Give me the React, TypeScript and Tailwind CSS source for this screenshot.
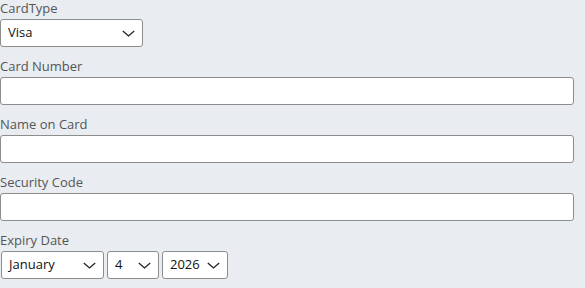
import React from "react";

const Chevron = () => (
  <svg width="13" height="7" viewBox="0 0 13 7" fill="none" className="shrink-0">
    <path d="M0.8 0.9 L6.5 5.9 L12.2 0.9" stroke="#222" strokeWidth="1.3" />
  </svg>
);

const Select = ({ value, w }: { value: string; w: string }) => (
  <div
    className={`${w} h-[28px] bg-white border border-[#8d8d8d] rounded-[3px] flex items-center justify-between pl-[7px] pr-[7px] text-[13px] text-[#111]`}
  >
    <span>{value}</span>
    <Chevron />
  </div>
);

const Label = ({ children }: { children: React.ReactNode }) => (
  <div className="text-[13px] leading-[19px] text-[#555]">{children}</div>
);

const Input = () => (
  <div className="w-[574px] h-[28px] bg-white border border-[#8d8d8d] rounded-[3px]" />
);

export default function App() {
  return (
    <div
      className="w-[585px] h-[288px] bg-[#e9edf1] overflow-hidden"
      style={{ fontFamily: '"Open Sans", "Noto Sans", sans-serif' }}
    >
      <div className="flex flex-col -mt-px">
        <div className="mb-[10px]">
          <Label>CardType</Label>
          <div className="mt-px">
            <Select value="Visa" w="w-[143px]" />
          </div>
        </div>
        <div className="mb-[10px]">
          <Label>Card Number</Label>
          <div className="mt-px">
            <Input />
          </div>
        </div>
        <div className="mb-[10px]">
          <Label>Name on Card</Label>
          <div className="mt-px">
            <Input />
          </div>
        </div>
        <div className="mb-[10px]">
          <Label>Security Code</Label>
          <div className="mt-px">
            <Input />
          </div>
        </div>
        <div>
          <Label>Expiry Date</Label>
          <div className="flex gap-[3px] ml-[1px] mt-px">
            <Select value="January" w="w-[103px]" />
            <Select value="4" w="w-[52px]" />
            <Select value="2026" w="w-[66px]" />
          </div>
        </div>
      </div>
    </div>
  );
}
